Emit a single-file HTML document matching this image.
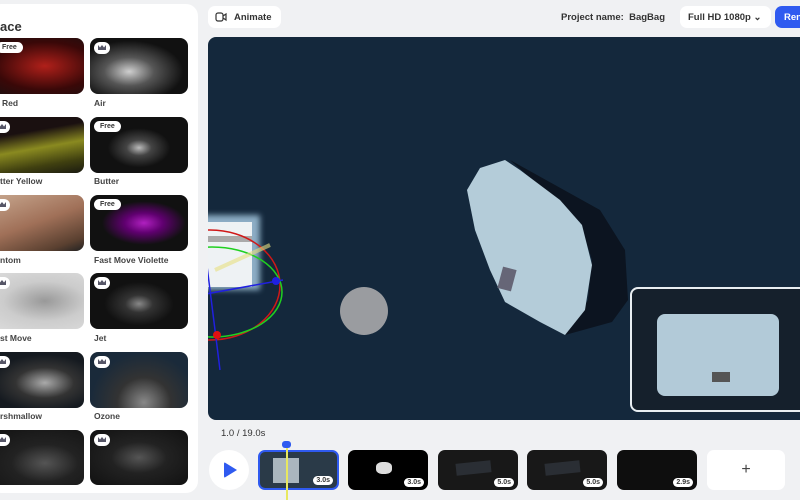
<!DOCTYPE html>
<html><head><meta charset="utf-8"><style>
*{box-sizing:border-box;margin:0;padding:0}
body{width:800px;height:500px;overflow:hidden;background:#f0f1f3;font-family:"Liberation Sans",sans-serif;position:relative;color:#333}
.panel{position:absolute;left:-10px;top:4px;width:208px;height:489px;background:#fff;border-radius:12px;overflow:hidden}
.title{position:absolute;left:10px;top:15px;font-size:13px;font-weight:bold;color:#333}
.card{position:absolute;width:98px;height:56px;border-radius:8px;overflow:hidden;background:#111}
.lbl{position:absolute;font-size:8.5px;font-weight:bold;color:#444}
.free{position:absolute;left:4px;top:4px;background:#fff;border-radius:8px;font-size:7px;font-weight:bold;color:#333;padding:2px 6px}
.crown{position:absolute;left:4px;top:4px;width:16px;height:12px;background:#fff;border-radius:6px}
.crown:after{content:"";position:absolute;left:4px;top:3px;width:8px;height:5px;background:#556;clip-path:polygon(0 0,25% 50%,50% 0,75% 50%,100% 0,100% 100%,0 100%)}
.btn{position:absolute;background:#fff;border-radius:7px;font-size:9.5px;font-weight:bold;color:#333}
.view{position:absolute;left:208px;top:37px;width:600px;height:383px;background:#14283c;border-radius:8px;overflow:hidden}
.clip{position:absolute;top:450px;width:80px;height:40px;border-radius:7px;background:#0a0a0a;overflow:hidden}
.dur{position:absolute;right:4px;bottom:3px;background:#fff;border-radius:6px;font-size:7px;padding:1px 3px;color:#333;font-weight:bold}
</style></head><body>
<div class="panel">
<div class="title">ace</div>
</div>
<div class="card" style="left:-14px;top:38px;background:radial-gradient(ellipse at 60% 50%,#b0201a,#3a0808 60%,#1a1010)"><div class="free" style="left:10px">Free</div></div>
<div class="card" style="left:90px;top:38px;background:radial-gradient(ellipse at 40% 60%,#cfcfcf 0,#555 30%,#111 65%)"><div class="crown"></div></div>
<div class="lbl" style="left:2px;top:98px">Red</div><div class="lbl" style="left:94px;top:98px">Air</div>
<div class="card" style="left:-14px;top:117px;background:linear-gradient(170deg,#1a1010 30%,#8a8a20 55%,#404010 80%,#1a1a10)"><div class="crown" style="left:8px"></div></div>
<div class="card" style="left:90px;top:117px;background:radial-gradient(ellipse at 50% 55%,#bbb 0,#444 18%,#111 45%)"><div class="free">Free</div></div>
<div class="lbl" style="left:0;top:176px">tter Yellow</div><div class="lbl" style="left:94px;top:176px">Butter</div>
<div class="card" style="left:-14px;top:195px;background:linear-gradient(160deg,#c8a890,#a07058 50%,#5a4030 85%,#222)"><div class="crown" style="left:8px"></div></div>
<div class="card" style="left:90px;top:195px;background:radial-gradient(ellipse at 55% 50%,#b020c0 0,#600070 25%,#111 55%)"><div class="free">Free</div></div>
<div class="lbl" style="left:0;top:255px">ntom</div><div class="lbl" style="left:94px;top:255px">Fast Move Violette</div>
<div class="card" style="left:-14px;top:273px;background:radial-gradient(ellipse at 60% 50%,#999,#ccc 50%,#ddd)"><div class="crown" style="left:8px"></div></div>
<div class="card" style="left:90px;top:273px;background:radial-gradient(ellipse at 50% 55%,#888 0,#333 20%,#111 50%)"><div class="crown"></div></div>
<div class="lbl" style="left:0;top:333px">st Move</div><div class="lbl" style="left:94px;top:333px">Jet</div>
<div class="card" style="left:-14px;top:352px;background:radial-gradient(ellipse at 60% 55%,#aaa 0,#333 35%,#151a20 65%)"><div class="crown" style="left:8px"></div></div>
<div class="card" style="left:90px;top:352px;background:radial-gradient(ellipse at 55% 90%,#888 0,#333 35%,#1a2a3a 70%)"><div class="crown"></div></div>
<div class="lbl" style="left:0;top:411px">rshmallow</div><div class="lbl" style="left:94px;top:411px">Ozone</div>
<div class="card" style="left:-14px;top:430px;height:55px;background:radial-gradient(ellipse at 60% 60%,#555 0,#222 40%,#111)"><div class="crown" style="left:8px"></div></div>
<div class="card" style="left:90px;top:430px;height:55px;background:radial-gradient(ellipse at 50% 50%,#555 0,#222 40%,#111)"><div class="crown"></div></div>

<div class="btn" style="left:208px;top:6px;width:73px;height:22px">
<svg style="position:absolute;left:7px;top:6px" width="12" height="10" viewBox="0 0 12 10"><rect x="1" y="1" width="7" height="8" rx="2" fill="none" stroke="#333" stroke-width="1.2"/><path d="M8 4l3-2v6l-3-2" fill="none" stroke="#333" stroke-width="1.2"/></svg>
<span style="position:absolute;left:26px;top:6px">Animate</span></div>
<div style="position:absolute;left:561px;top:12px;font-size:9.5px;font-weight:bold;color:#333">Project name:&nbsp; BagBag</div>
<div class="btn" style="left:680px;top:6px;width:91px;height:22px"><span style="position:absolute;left:8px;top:6px">Full HD 1080p ⌄</span></div>
<div style="position:absolute;left:775px;top:6px;width:40px;height:22px;background:#2f5af0;border-radius:7px;color:#fff;font-size:9.5px;font-weight:bold;padding:6px 0 0 9px">Ren</div>

<div class="view">
<svg width="600" height="383" viewBox="208 37 600 383">
<defs><filter id="b"><feGaussianBlur stdDeviation="3"/></filter></defs>
<rect x="200" y="215" width="60" height="75" fill="#bfe6ff" filter="url(#b)" opacity=".7"/>
<rect x="200" y="222" width="52" height="65" fill="#eef2f4"/>
<rect x="200" y="236" width="52" height="6" fill="#aaa"/>
<ellipse cx="210" cy="285" rx="70" ry="55" fill="none" stroke="#d01818" stroke-width="1.5"/>
<ellipse cx="212" cy="292" rx="70" ry="45" fill="none" stroke="#20d020" stroke-width="1.5"/>
<path d="M200 295L283 280" stroke="#2020e0" stroke-width="1.5"/><circle cx="276" cy="281" r="4" fill="#2020e0"/>
<path d="M205 250L220 370" stroke="#2020e0" stroke-width="1.5"/><circle cx="217" cy="335" r="4" fill="#e01010"/>
<path d="M215 270L270 245" stroke="#e8e080" stroke-width="4" opacity=".6"/>
<circle cx="364" cy="311" r="24" fill="#9a9ca0"/>
<polygon points="510,160 600,210 625,250 628,300 612,322 565,335 588,300 592,260 580,222" fill="#0c1420"/>
<polygon points="467,190 480,168 505,160 520,170 560,200 582,225 592,265 585,310 565,335 540,322 505,302 490,270 475,230" fill="#b4ccd9"/>
<rect x="500" y="268" width="14" height="22" fill="#667" transform="rotate(15 507 279)"/>
</svg>
<div style="position:absolute;left:422px;top:250px;width:180px;height:125px;border:2px solid #e8eef2;border-radius:8px;background:#15202c">
<div style="position:absolute;left:25px;top:25px;width:122px;height:82px;background:#b2cad8;border-radius:8px"></div>
<div style="position:absolute;left:80px;top:83px;width:18px;height:10px;background:#555"></div>
</div>
</div>

<div style="position:absolute;left:221px;top:428px;font-size:9.5px;color:#333">1.0 / 19.0s</div>
<div style="position:absolute;left:209px;top:450px;width:40px;height:40px;border-radius:50%;background:#fff"><div style="position:absolute;left:15px;top:12px;width:0;height:0;border-left:13px solid #2f5af0;border-top:8px solid transparent;border-bottom:8px solid transparent;border-radius:2px"></div></div>
<div class="clip" style="left:258px;width:81px;border:2px solid #2f5af0;background:#2a3a48"><div style="position:absolute;left:13px;top:6px;width:26px;height:25px;background:#aab6be"></div><div class="dur">3.0s</div></div>
<div style="position:absolute;left:286px;top:446px;width:1.5px;height:54px;background:#e8e860"></div>
<div style="position:absolute;left:282px;top:441px;width:9px;height:7px;background:#2f5af0;border-radius:3px"></div>
<div class="clip" style="left:348px;background:#000"><div style="position:absolute;left:28px;top:12px;width:16px;height:12px;background:#ddd;border-radius:40%"></div><div class="dur">3.0s</div></div>
<div class="clip" style="left:438px;background:#181818"><div style="position:absolute;left:18px;top:12px;width:35px;height:12px;background:#2a2e34;transform:rotate(-6deg)"></div><div class="dur">5.0s</div></div>
<div class="clip" style="left:527px;background:#181818"><div style="position:absolute;left:18px;top:12px;width:35px;height:12px;background:#2a2e34;transform:rotate(-6deg)"></div><div class="dur">5.0s</div></div>
<div class="clip" style="left:617px;background:#0e0e0e"><div class="dur">2.9s</div></div>
<div style="position:absolute;left:707px;top:450px;width:78px;height:40px;border-radius:7px;background:#fff;text-align:center;font-size:16px;line-height:40px;color:#444">+</div>
</body></html>
